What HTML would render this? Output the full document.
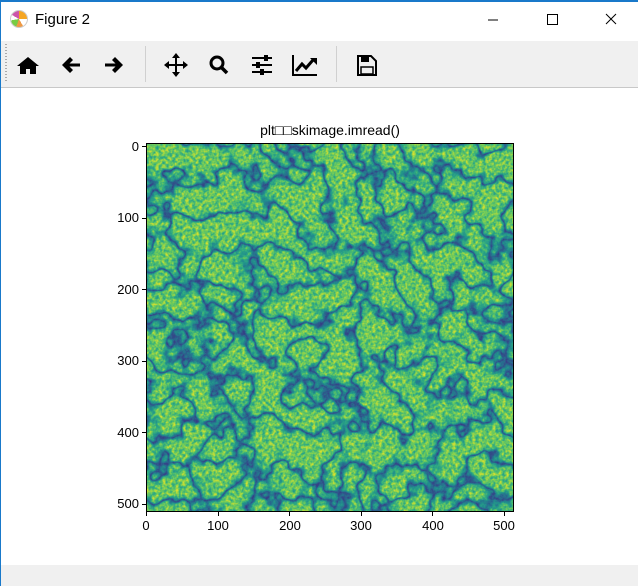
<!DOCTYPE html><html><head><style>
body{margin:0;width:638px;height:586px;overflow:hidden;background:#fff;font-family:"Liberation Sans","Noto Sans CJK SC",sans-serif;position:relative}
.a{position:absolute}
.t{font-size:13px;color:#000}
</style></head><body>
<div class="a" style="left:0;top:0;width:638px;height:2px;background:#1979ca"></div>
<div class="a" style="left:0;top:0;width:1px;height:586px;background:#1979ca"></div>
<div class="a" style="left:10px;top:10px;width:18px;height:18px;border-radius:50%;border:1px solid #ccc;box-sizing:border-box;background:conic-gradient(#f5a623 0 90deg,#fff 90deg 150deg,#e94 150deg 200deg,#7c4 200deg 260deg,#fff 260deg 300deg,#c5a 300deg)"></div>
<div class="a" style="left:35px;top:11px;font-size:15px;font-family:'Liberation Sans',sans-serif">Figure 2</div>
<svg class="a" style="left:480px;top:8px" width="150" height="24"><line x1="8" y1="12" x2="18" y2="12" stroke="#000"/><rect x="67.5" y="6.5" width="10" height="10" fill="none" stroke="#000"/><path d="M126 6l10 10M136 6l-10 10" stroke="#000"/></svg>
<div class="a" style="left:1px;top:41px;width:637px;height:46px;background:#f0f0f0;border-bottom:1px solid #c8c8c8"></div>
<div class="a" style="left:5px;top:44px;width:2px;height:38px;background:repeating-linear-gradient(#aaa 0 1px,transparent 1px 3px)"></div>
<div class="a" style="left:145px;top:46px;width:1px;height:36px;background:#d0d0d0"></div>
<div class="a" style="left:336px;top:46px;width:1px;height:36px;background:#d0d0d0"></div>
<svg class="a" style="left:0;top:41px" width="400" height="46" fill="#000">
<path d="M28 16l-11 9h3v8h6v-5h4v5h6v-8h3z"/>
<path d="M62 24l8-8 3 3-3.5 3.5h10.5v3h-10.5l3.5 3.5-3 3z"/>
<path d="M123 24l-8-8-3 3 3.5 3.5h-10.5v3h10.5l-3.5 3.5 3 3z"/>
<path d="M176 12l4 5h-3v6h6v-3l5 4-5 4v-3h-6v6h3l-4 5-4-5h3v-6h-6v3l-5-4 5-4v3h6v-6h-3z"/>
<circle cx="217" cy="22" r="6" fill="none" stroke="#000" stroke-width="3"/><path d="M221 26l6 6" stroke="#000" stroke-width="3.5"/>
<path d="M252 17h20M252 24h20M252 31h20" stroke="#000" stroke-width="2"/><rect x="264" y="14" width="4" height="6"/><rect x="256" y="21" width="4" height="6"/><rect x="260" y="28" width="4" height="6"/>
<path d="M293 14v20h24" fill="none" stroke="#000" stroke-width="2"/><path d="M296 30l6-7 4 4 7-8" fill="none" stroke="#000" stroke-width="3"/><path d="M310 17h7v7z"/>
<path d="M358 15h13l5 5v14h-18z" fill="none" stroke="#000" stroke-width="2"/><rect x="361" y="16" width="8" height="5"/><rect x="361" y="26" width="12" height="7" fill="none" stroke="#000" stroke-width="1.5"/>
</svg>
<div class="a t" style="left:0;width:660px;top:122px;text-align:center;font-size:14px">plt□□skimage.imread()</div>
<svg class="a" style="left:146px;top:143px" width="368" height="369">
<defs><filter id="f" x="0" y="0" width="1" height="1" color-interpolation-filters="sRGB">
<feTurbulence type="fractalNoise" baseFrequency="0.028" numOctaves="3" seed="5" result="a"/>
<feColorMatrix in="a" type="matrix" values="1 0 0 0 0 1 0 0 0 0 1 0 0 0 0 0 0 0 0 1" result="a1"/>
<feComponentTransfer in="a1" result="r"><feFuncR type="table" tableValues="1 1 1 1 1 1 1 0.85 0.3 0.85 1 1 1 1 1 1 1"/><feFuncG type="table" tableValues="1 1 1 1 1 1 1 0.85 0.3 0.85 1 1 1 1 1 1 1"/><feFuncB type="table" tableValues="1 1 1 1 1 1 1 0.85 0.3 0.85 1 1 1 1 1 1 1"/></feComponentTransfer>
<feTurbulence type="fractalNoise" baseFrequency="0.3" numOctaves="2" seed="9" result="b"/>
<feColorMatrix in="b" type="matrix" values="1 0 0 0 0 1 0 0 0 0 1 0 0 0 0 0 0 0 0 1" result="b1"/>
<feComposite in="r" in2="b1" operator="arithmetic" k1="0.6" k2="0.36" k3="0" k4="0" result="v"/>
<feComponentTransfer in="v"><feFuncR type="table" tableValues="0.27 0.23 0.16 0.13 0.2 0.45 0.8 0.99"/><feFuncG type="table" tableValues="0.0 0.2 0.42 0.57 0.68 0.8 0.87 0.9"/><feFuncB type="table" tableValues="0.33 0.52 0.56 0.55 0.5 0.35 0.2 0.14"/><feFuncA type="table" tableValues="1 1"/></feComponentTransfer>
</filter></defs>
<rect width="368" height="369" filter="url(#f)"/>
<rect x="0.5" y="0.5" width="367" height="368" fill="none" stroke="#000"/>
</svg>
<svg class="a" style="left:0;top:0" width="638" height="586" font-family="Liberation Sans" font-size="13">
<g stroke="#000"><path d="M142 146.5h4M142 218.5h4M142 289.5h4M142 361.5h4M142 432.5h4M142 504.5h4"/><path d="M146.5 512v4M218.5 512v4M289.5 512v4M361.5 512v4M432.5 512v4M504.5 512v4"/></g>
<g text-anchor="end"><text x="139" y="151">0</text><text x="139" y="222">100</text><text x="139" y="294">200</text><text x="139" y="365">300</text><text x="139" y="437">400</text><text x="139" y="508">500</text></g>
<g text-anchor="middle"><text x="146" y="530">0</text><text x="218" y="530">100</text><text x="290" y="530">200</text><text x="361" y="530">300</text><text x="433" y="530">400</text><text x="504" y="530">500</text></g>
</svg>
<div class="a" style="left:1px;top:565px;width:637px;height:21px;background:#f0f0f0"></div>
</body></html>
